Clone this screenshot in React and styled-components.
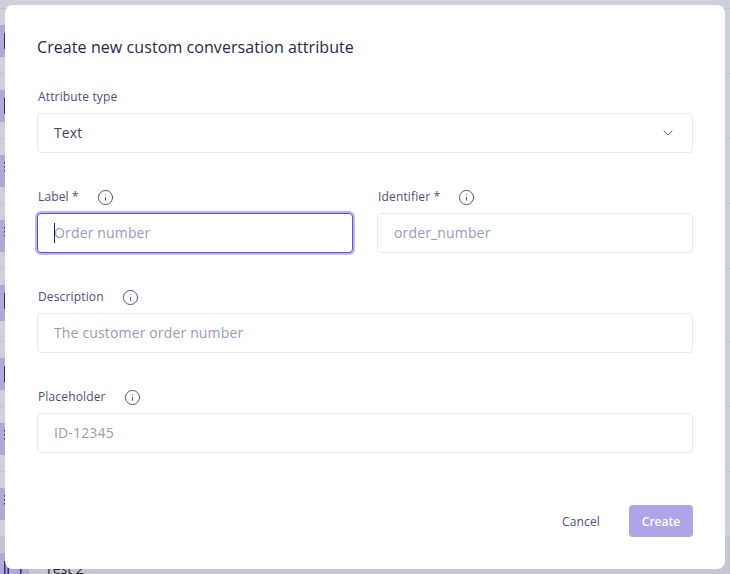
import React from 'react'
import styled, { createGlobalStyle } from 'styled-components'
import { ChevronDown, Info } from 'lucide-react'

const GlobalStyle = createGlobalStyle`
  html, body {
    margin: 0;
    height: 100%;
    overflow: hidden;
    background: #ccd0d9;
    font-family: "Open Sans", "Noto Sans", sans-serif;
  }
  * { box-sizing: border-box; }
`

const PageList = styled.div`
  height: 574px;
  padding-top: 8px;
  overflow: hidden;
  background: #ccd0d9;
`
const ListRow = styled.div`
  display: flex;
  align-items: flex-start;
  gap: 16px;
  height: ${(p) => (p.$tall ? 73 : 65)}px;
  padding-top: 16px;
  border-top: 1px solid #c0c4ce;
  background: ${(p) => (p.$hovered ? '#c4c7d1' : 'transparent')};
  color: #1c2340;
  font-size: 14px;
  line-height: 32px;
`
const RowHandle = styled.svg`
  display: block;
  flex: none;
  width: 29px;
  height: ${(p) => (p.$tall ? 36 : 32)}px;
  background: #aea9d9;
  color: #2f2b7c;
`
const Overlay = styled.div`
  position: fixed;
  inset: 0;
  padding: 5px;
`
const Modal = styled.form`
  display: flex;
  flex-direction: column;
  height: 564px;
  padding: 32px;
  background: #ffffff;
  border-radius: 8px;
`
const Title = styled.h2`
  margin: 0 0 30px;
  color: #1f2a48;
  font-size: 16px;
  line-height: 20px;
  font-weight: 500;
  letter-spacing: 0.08px;
`
const FormRow = styled.div`
  display: flex;
  gap: 24px;
  margin-bottom: 34px;
`
const Field = styled.div`
  position: relative;
  flex: 1;
  min-width: 0;
`
const LabelRow = styled.div`
  display: flex;
  align-items: center;
  gap: 18px;
  height: 20px;
  margin: 0 0 6px 1px;
  padding-bottom: 2px;
  color: #45517a;
  font-size: 12px;
  font-weight: 500;
  letter-spacing: 0.15px;
`
const HintIcon = styled(Info)`
  width: 17px;
  height: 17px;
  margin-top: 2px;
  color: #3f4b72;
  stroke-width: 1.3;
`
const TextInput = styled.input`
  display: block;
  width: 100%;
  height: 40px;
  padding: 0 16px 2px;
  background: #ffffff;
  border: 1px solid ${(p) => (p.$focused ? '#5b4ee0' : '#e7eaf1')};
  border-radius: 4px;
  box-shadow: ${(p) => (p.$focused ? '0 0 0 2px #bdb7f2' : 'none')};
  color: #2d3654;
  font: inherit;
  font-size: 14px;
  letter-spacing: 0.15px;
  outline: none;

  &::placeholder {
    color: #929eba;
    opacity: 1;
  }
`
const Caret = styled.span`
  position: absolute;
  left: 17px;
  bottom: 10px;
  width: 1px;
  height: 20px;
  background: #1c2050;
`
const SelectBox = styled.div`
  display: flex;
  align-items: center;
  justify-content: space-between;
  height: 40px;
  padding: 0 16px 2px;
  border: 1px solid #e7eaf1;
  border-radius: 4px;
  color: #3d4766;
  font-size: 14px;
  letter-spacing: 0.15px;
`
const SelectChevron = styled(ChevronDown)`
  width: 16px;
  height: 16px;
  margin-top: 2px;
  color: #4a5578;
  stroke-width: 1.3;
`
const Footer = styled.div`
  display: flex;
  align-items: center;
  justify-content: flex-end;
  gap: 29px;
  margin-top: auto;
`
const CancelButton = styled.button`
  padding: 0;
  background: none;
  border: 0;
  color: #45517a;
  font: inherit;
  font-size: 12px;
  font-weight: 500;
  letter-spacing: 0.15px;
`
const CreateButton = styled.button`
  width: 64px;
  height: 32px;
  padding: 0;
  background: #aea4ea;
  border: 0;
  border-radius: 4px;
  color: #ffffff;
  font: inherit;
  font-size: 12px;
  font-weight: 600;
`

function HandleMark({ kind, tall }) {
  return (
    <RowHandle $tall={tall} viewBox={`0 0 29 ${tall ? 36 : 32}`}>
      {kind === 'bar' && <rect x="4" y="8" width="1.5" height="16" fill="currentColor" />}
      {kind === 'dots' && (
        <g fill="currentColor">
          <rect x="4" y="7" width="1.5" height="1.5" />
          <rect x="4" y="11" width="1.5" height="1.5" />
          <rect x="4" y="15" width="1.5" height="1.5" />
        </g>
      )}
      {kind === 'type' && (
        <g fill="currentColor">
          <rect x="4" y="8" width="1.5" height="16" />
          <rect x="7.5" y="15" width="1.5" height="9" />
          <rect x="20" y="15" width="1.5" height="9" />
        </g>
      )}
    </RowHandle>
  )
}

function FieldLabel({ text, hint }) {
  return (
    <LabelRow>
      {text}
      {hint && <HintIcon />}
    </LabelRow>
  )
}

const rows = [
  { name: 'Test 10', kind: 'bar' },
  { name: 'Test 9', kind: 'bar' },
  { name: 'Test 8', kind: 'dots' },
  { name: 'Test 7', kind: 'dots' },
  { name: 'Test 6', kind: 'bar', tall: true },
  { name: 'Test 5', kind: 'bar' },
  { name: 'Test 4', kind: 'dots' },
  { name: 'Test 3', kind: 'dots' },
  { name: 'Test 2', kind: 'type', hovered: true },
]

export default function App() {
  return (
    <>
      <GlobalStyle />
      <PageList>
        {rows.map((row) => (
          <ListRow key={row.name} $tall={row.tall} $hovered={row.hovered}>
            <HandleMark kind={row.kind} tall={row.tall} />
            {row.name}
          </ListRow>
        ))}
      </PageList>
      <Overlay>
        <Modal>
          <Title>Create new custom conversation attribute</Title>
          <FormRow>
            <Field>
              <FieldLabel text="Attribute type" />
              <SelectBox>
                Text
                <SelectChevron />
              </SelectBox>
            </Field>
          </FormRow>
          <FormRow>
            <Field>
              <FieldLabel text="Label *" hint />
              <TextInput $focused placeholder="Order number" />
              <Caret />
            </Field>
            <Field>
              <FieldLabel text="Identifier *" hint />
              <TextInput placeholder="order_number" />
            </Field>
          </FormRow>
          <FormRow>
            <Field>
              <FieldLabel text="Description" hint />
              <TextInput placeholder="The customer order number" />
            </Field>
          </FormRow>
          <FormRow>
            <Field>
              <FieldLabel text="Placeholder" hint />
              <TextInput placeholder="ID-12345" />
            </Field>
          </FormRow>
          <Footer>
            <CancelButton type="button">Cancel</CancelButton>
            <CreateButton type="button">Create</CreateButton>
          </Footer>
        </Modal>
      </Overlay>
    </>
  )
}
